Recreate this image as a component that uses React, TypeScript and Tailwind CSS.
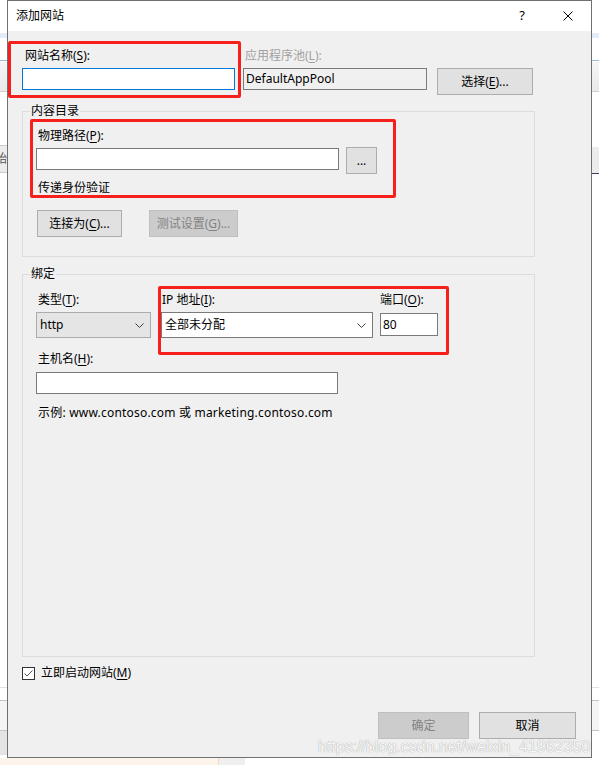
import React from 'react';

const labelCls = 'block h-[20px] leading-[20px] text-[12px] whitespace-nowrap';
const btnCls =
    'flex items-center justify-center h-[27px] border border-[#adadad] bg-[#e1e1e1] text-[12px] text-black';
const btnDisabledCls =
    'flex items-center justify-center h-[27px] border border-[#bfbfbf] bg-[#cccccc] text-[12px] text-[#838383]';

function Chevron() {
    return (
        <svg width="9" height="5" viewBox="0 0 9 5" className="shrink-0">
            <polyline points="0.5,0.5 4.5,4.5 8.5,0.5" fill="none" stroke="#404040" strokeWidth="1" />
        </svg>
    );
}

function Key({ k }: { k: string }) {
    return <u className="underline-offset-2">{k}</u>;
}

function DesktopBehind() {
    // the edges of the window that sits under the dialog
    return (
        <>
            <div className="absolute left-0 right-0 top-[33px] h-[5px] bg-[#e3edf8]" />
            <div className="absolute left-0 right-0 top-[60px] h-px bg-[#9fb7d3]" />
            <div className="absolute left-0 right-0 top-[62px] h-[30px] bg-gradient-to-b from-[#f6f6f6] to-[#e9e9e9] border-b border-[#cfcfcf]" />
            <div className="absolute left-0 top-[145px] w-[8px] h-[28px] bg-[#ececec] border-r border-y border-[#c9c9c9] overflow-hidden">
                <span className="block ml-[-5px] text-[12px] leading-[26px] text-[#555] whitespace-nowrap">始</span>
            </div>
            <div className="absolute right-0 top-[147px] w-[8px] h-[27px] bg-[#ececec] border-b border-[#3c3c5c]" />
            <div className="absolute left-0 right-0 top-[687px] h-px bg-[#e3e3e3]" />
            <div className="absolute left-0 right-0 top-[700px] h-[31px] bg-[#f5f5f5] border-t border-b border-[#c4c4c4]" />
            <div className="absolute left-0 w-[8px] top-[731px] h-[24px] bg-[#e4e4e4]" />
            <div className="absolute left-0 top-[758px] w-[219px] h-[7px] bg-[#fdf4ec] border-r border-[#f3d9c4]" />
            <div className="absolute left-[219px] top-[758px] w-[26px] h-[7px] bg-[#efefef]" />
        </>
    );
}

export default function App() {
    return (
        <div className="relative w-[599px] h-[765px] overflow-hidden bg-white text-black font-['Noto_Sans','Noto_Sans_CJK_SC',sans-serif]">
            <DesktopBehind />

            {/* 添加网站 dialog */}
            <div className="absolute left-[7px] top-0 w-[585px] h-[758px] border border-[#707070] bg-[#f0f0f0] flex flex-col">
                <div className="h-[30px] shrink-0 bg-white flex items-center">
                    <span className="pl-[8px] text-[12px] flex-1">添加网站</span>
                    <div className="w-[46px] h-full flex items-center justify-center text-[13px]">?</div>
                    <div className="w-[46px] h-full flex items-center justify-center">
                        <svg width="10" height="10" viewBox="0 0 10 10">
                            <path d="M0.5 0.5 L9.5 9.5 M9.5 0.5 L0.5 9.5" stroke="#000" strokeWidth="1" />
                        </svg>
                    </div>
                </div>

                <div className="flex-1 pl-[14px] pt-[15px] flex flex-col">
                    {/* site name / app pool */}
                    <div className="flex">
                        <div className="w-[213px]">
                            <label className={`${labelCls} pl-[3px]`}>
                                网站名称(<Key k="S" />):
                            </label>
                            <div className="mt-[2px] h-[22px] border border-[#0078d7] bg-white" />
                        </div>
                        <div className="ml-[8px] w-[184px]">
                            <label className={`${labelCls} pl-[2px] text-[#a0a0a0]`}>
                                应用程序池(<Key k="L" />):
                            </label>
                            <div className="mt-[2px] h-[22px] border border-[#7a7a7a] bg-[#f0f0f0] pl-[2px] text-[12px] leading-[20px]">
                                DefaultAppPool
                            </div>
                        </div>
                        <div className="ml-[10px] pt-[22px]">
                            <div className={`${btnCls} w-[96px]`}>
                                选择(<Key k="E" />)...
                            </div>
                        </div>
                    </div>

                    {/* 内容目录 */}
                    <fieldset className="mt-[6px] w-[513px] border border-[#dcdcdc] p-0 m-0 min-w-0">
                        <legend className="ml-[7px] px-[1px] h-[20px] leading-[20px] text-[12px]">内容目录</legend>
                        <div className="pl-[13px] pt-[5px] pb-[19px]">
                            <label className={`${labelCls} pl-[2px]`}>
                                物理路径(<Key k="P" />):
                            </label>
                            <div className="mt-[1px] flex items-start">
                                <div className="mt-[1px] w-[303px] h-[22px] border border-[#7a7a7a] bg-white" />
                                <div className={`${btnCls} ml-[7px] w-[31px] leading-none`}>...</div>
                            </div>
                            <div className={`${labelCls} mt-[4px] pl-[2px]`}>传递身份验证</div>
                            <div className="mt-[12px] flex">
                                <div className={`${btnCls} ml-[1px] w-[85px]`}>
                                    连接为(<Key k="C" />)...
                                </div>
                                <div className={`${btnDisabledCls} ml-[27px] w-[89px]`}>
                                    测试设置(<Key k="G" />)...
                                </div>
                            </div>
                        </div>
                    </fieldset>

                    {/* 绑定 */}
                    <fieldset className="mt-[7px] w-[513px] h-[393px] border border-[#dcdcdc] p-0 m-0 min-w-0">
                        <legend className="ml-[7px] px-[1px] h-[20px] leading-[20px] text-[12px]">绑定</legend>
                        <div className="pl-[13px] pt-[6px]">
                            <div className="flex">
                                <div className="w-[115px]">
                                    <label className={`${labelCls} pl-[2px]`}>
                                        类型(<Key k="T" />):
                                    </label>
                                    <div className="mt-[2px] h-[26px] border border-[#acacac] bg-[#e5e5e5] flex items-center pl-[3px] pr-[6px] text-[12px]">
                                        <span className="flex-1">http</span>
                                        <Chevron />
                                    </div>
                                </div>
                                <div className="ml-[10px] w-[212px]">
                                    <label className={`${labelCls} pl-[1px]`}>
                                        IP 地址(<Key k="I" />):
                                    </label>
                                    <div className="mt-[2px] h-[26px] border border-[#7a7a7a] bg-white flex items-center pl-[3px] pr-[6px] text-[12px]">
                                        <span className="flex-1">全部未分配</span>
                                        <Chevron />
                                    </div>
                                </div>
                                <div className="ml-[7px] w-[58px]">
                                    <label className={labelCls}>
                                        端口(<Key k="O" />):
                                    </label>
                                    <div className="mt-[3px] h-[23px] border border-[#7a7a7a] bg-white pl-[2px] text-[12px] leading-[21px]">
                                        80
                                    </div>
                                </div>
                            </div>
                            <label className={`${labelCls} mt-[11px] pl-[2px]`}>
                                主机名(<Key k="H" />):
                            </label>
                            <div className="mt-[3px] w-[302px] h-[22px] border border-[#7a7a7a] bg-white" />
                            <div className={`${labelCls} mt-[9px] pl-[2px] tracking-[0.2px]`}>
                                示例: www.contoso.com 或 marketing.contoso.com
                            </div>
                        </div>
                    </fieldset>

                    <div className="mt-[6px] h-[20px] flex items-center">
                        <div className="w-[13px] h-[13px] border border-[#333] bg-white flex items-center justify-center">
                            <svg width="11" height="11" viewBox="0 0 11 11">
                                <polyline points="1.5,5.5 4,8 9.5,2.5" fill="none" stroke="#555" strokeWidth="1" />
                            </svg>
                        </div>
                        <span className="ml-[6px] text-[12px]">
                            立即启动网站(<Key k="M" />)
                        </span>
                    </div>

                    <div className="mt-[29px] pr-[15px] flex justify-end gap-[10px]">
                        <div className={`${btnDisabledCls} w-[91px]`}>确定</div>
                        <div className={`${btnCls} w-[97px]`}>取消</div>
                    </div>
                </div>
            </div>

            {/* red annotation frames */}
            <div className="absolute left-[8px] top-[41px] w-[233px] h-[57px] border-[3px] border-[#f5201b] rounded-[2px] pointer-events-none" />
            <div className="absolute left-[30px] top-[119px] w-[366px] h-[79px] border-[3px] border-[#f5201b] rounded-[2px] pointer-events-none" />
            <div className="absolute left-[158px] top-[286px] w-[291px] h-[69px] border-[3px] border-[#f5201b] rounded-[2px] pointer-events-none" />

            <div className="absolute left-[318px] top-[737px] text-[16px] leading-[20px] text-[#f7f7f7] font-['Liberation_Sans',sans-serif] [text-shadow:0_0_1px_#8a8a8a] whitespace-nowrap pointer-events-none">
                https://blog.csdn.net/weixin_41962350
            </div>
        </div>
    );
}
